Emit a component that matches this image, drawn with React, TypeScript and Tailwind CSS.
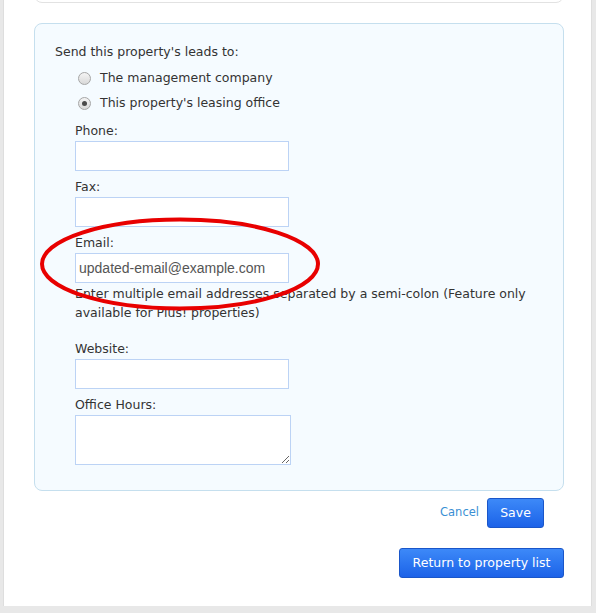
import React from "react";

function Radio({ checked }: { checked?: boolean }) {
  return (
    <span className="relative flex h-[13px] w-[13px] items-center justify-center rounded-full border border-[#a6a6a6] bg-gradient-to-b from-[#f4f4f4] to-[#d9d9d9]">
      {checked && <span className="h-[5px] w-[5px] rounded-full bg-[#4a4a4a]" />}
    </span>
  );
}

function Field({ label, mt, children }: { label: string; mt: string; children: React.ReactNode }) {
  return (
    <div className={mt}>
      <div className="leading-[20px]">{label}</div>
      {children}
    </div>
  );
}

const inputCls =
  "block h-[30px] w-[214px] border border-[#bcd3f5] bg-white px-[3px] text-[14px] text-[#555] outline-none font-['Liberation_Sans',Arial,sans-serif]";

export default function App() {
  return (
    <div
      className="relative h-[613px] w-[596px] overflow-hidden bg-[#e8e8e8]"
      style={{ fontFamily: '"DejaVu Sans", Verdana, sans-serif' }}
    >
      <div className="ml-[3px] h-[606px] w-[589px] border-l border-r border-[#dedede] bg-white text-[12.5px] text-[#333]">
        <div className="ml-[30px] flow-root w-[530px]">
          <div className="mt-[-20px] h-[23px] rounded-b-lg border border-[#e2e2e2] bg-white" />
          <div className="mt-[20px] rounded-lg border border-[#c5dfee] bg-[#f5fbff] pb-[25px] pl-[20px] pt-[18px]">
            <div className="leading-[20px]">Send this property's leads to:</div>
            <div className="mt-[4px] pl-[23px]">
              <div className="flex h-[25px] items-center gap-[9px]">
                <Radio />
                <span>The management company</span>
              </div>
              <div className="flex h-[25px] items-center gap-[9px]">
                <Radio checked />
                <span>This property's leasing office</span>
              </div>
            </div>
            <div className="pl-[20px]">
              <Field label="Phone:" mt="mt-[5px]">
                <input className={inputCls} defaultValue="" />
              </Field>
              <Field label="Fax:" mt="mt-[6px]">
                <input className={inputCls} defaultValue="" />
              </Field>
              <Field label="Email:" mt="mt-[6px]">
                <input className={inputCls} defaultValue="updated-email@example.com" />
              </Field>
              <div className="mt-[1px] w-[468px] leading-[19px]">
                Enter multiple email addresses separated by a semi-colon (Feature only available for Plus! properties)
              </div>
              <Field label="Website:" mt="mt-[17px]">
                <input className={inputCls} defaultValue="" />
              </Field>
              <Field label="Office Hours:" mt="mt-[6px]">
                <textarea className="block h-[50px] w-[216px] border border-[#bcd3f5] bg-white text-[14px] outline-none" />
              </Field>
            </div>
          </div>
          <div className="mt-[7px] flex items-center justify-end gap-[8px] pr-[20px]">
            <span className="text-[11.5px] text-[#3a8fd4]">Cancel</span>
            <button className="h-[30px] w-[57px] rounded-[3px] border border-[#1a56c9] bg-gradient-to-b from-[#3d89f8] to-[#1c62e8] text-[12.5px] text-white">
              Save
            </button>
          </div>
          <div className="mt-[20px] flex justify-end">
            <button className="h-[30px] w-[165px] rounded-[3px] border border-[#1a56c9] bg-gradient-to-b from-[#3d89f8] to-[#1c62e8] text-[12.5px] text-white">
              Return to property list
            </button>
          </div>
        </div>
      </div>
      <svg className="pointer-events-none absolute left-0 top-0" width="596" height="613">
        <ellipse cx="180" cy="264" rx="138" ry="44.5" fill="none" stroke="#e80000" strokeWidth="4" />
      </svg>
    </div>
  );
}
